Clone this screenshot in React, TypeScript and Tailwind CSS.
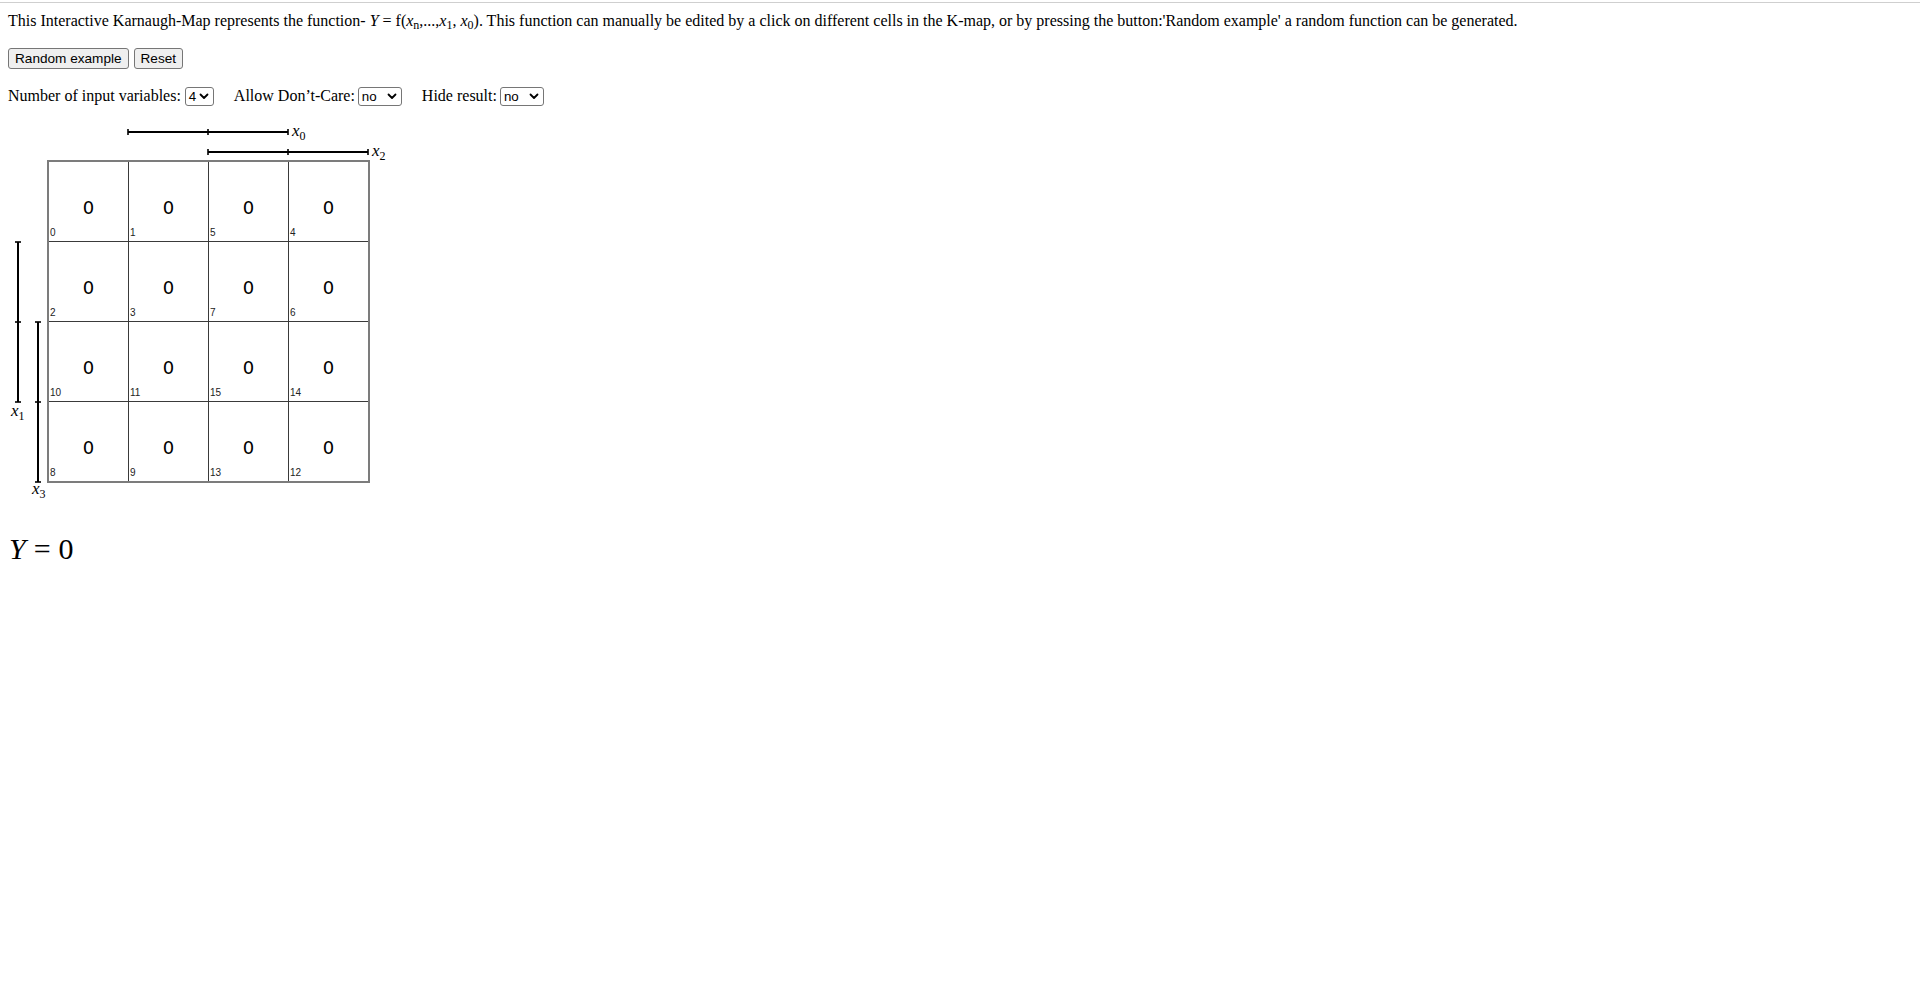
import { useState } from "react";

const ORDER = [
  [0, 1, 5, 4],
  [2, 3, 7, 6],
  [10, 11, 15, 14],
  [8, 9, 13, 12],
];

function Chevron() {
  return (
    <svg width="10" height="7" viewBox="0 0 10 7" fill="none" aria-hidden="true">
      <path d="M1.5 1.5l3.5 3.5 3.5-3.5" stroke="#000" strokeWidth="1.8" strokeLinecap="round" strokeLinejoin="round" />
    </svg>
  );
}

function Select({ value, width }: { value: string; width: string }) {
  return (
    <span
      className={`inline-flex h-[19px] items-center justify-between rounded-[3px] border border-[#767676] bg-white pl-[3px] pr-[4px] font-['Liberation_Sans',Arial,sans-serif] text-[13.33px] text-black ${width}`}
    >
      <span>{value}</span>
      <Chevron />
    </span>
  );
}

function Var({ sub }: { sub: string }) {
  return (
    <span>
      <i>x</i>
      <sub>{sub}</sub>
    </span>
  );
}

function AxisLabel({ sub, className }: { sub: string; className: string }) {
  return (
    <span className={`absolute font-['Liberation_Serif','Times_New_Roman',serif] text-[17px] leading-[17px] whitespace-nowrap ${className}`}>
      <i>x</i>
      <span className="relative top-[4px] text-[12px]">{sub}</span>
    </span>
  );
}

function Bar({ x1, y1, x2, y2 }: { x1: number; y1: number; x2: number; y2: number }) {
  const horizontal = y1 === y2;
  const ticks = horizontal ? [x1, (x1 + x2) / 2, x2] : [y1, (y1 + y2) / 2, y2];
  return (
    <g stroke="#000" strokeWidth="2">
      <line x1={x1} y1={y1} x2={x2} y2={y2} />
      {ticks.map((t) =>
        horizontal ? (
          <line key={t} x1={t} y1={y1 - 3} x2={t} y2={y1 + 3} strokeWidth="1.6" />
        ) : (
          <line key={t} x1={x1 - 3} y1={t} x2={x1 + 3} y2={t} strokeWidth="1.6" />
        )
      )}
    </g>
  );
}

function KMap({ values, onToggle }: { values: number[]; onToggle: (i: number) => void }) {
  return (
    <div className="relative h-[390px] w-[400px] pt-[49px]">
      <svg className="absolute left-0 top-0" width="400" height="390" aria-hidden="true">
        <Bar x1={128} y1={21} x2={288} y2={21} />
        <Bar x1={208} y1={41} x2={368} y2={41} />
        <Bar x1={18} y1={131} x2={18} y2={291} />
        <Bar x1={38} y1={211} x2={38} y2={371} />
      </svg>
      <AxisLabel sub="0" className="left-[292px] top-[11px]" />
      <AxisLabel sub="2" className="left-[372px] top-[31px]" />
      <AxisLabel sub="1" className="left-[11px] top-[291px]" />
      <AxisLabel sub="3" className="left-[32px] top-[369px]" />

      <div className="ml-[47px] grid w-fit grid-cols-[80px_80px_80px_79px] border-2 border-[#7c7c7c]">
        {ORDER.map((row, r) =>
          row.map((idx, c) => (
            <div
              key={idx}
              onClick={() => onToggle(idx)}
              className={`flex cursor-pointer flex-col ${c < 3 ? "border-r border-[#3a3a3a]" : ""} ${
                r < 3 ? "h-[80px] border-b border-[#3a3a3a]" : "h-[79px]"
              }`}
            >
              <div className="pt-[36px] text-center font-['DejaVu_Sans',Verdana,sans-serif] text-[18px] leading-[20px] text-black">
                {values[idx]}
              </div>
              <div className="mt-auto pb-[3px] pl-[1px] font-['Liberation_Sans',Arial,sans-serif] text-[10px] leading-[11px] text-[#222]">
                {idx}
              </div>
            </div>
          ))
        )}
      </div>
    </div>
  );
}

export default function App() {
  const [values, setValues] = useState<number[]>(() => Array(16).fill(0));
  const toggle = (i: number) =>
    setValues((prev) => prev.map((v, j) => (j === i ? (v ? 0 : 1) : v)));

  return (
    <div className="min-h-screen bg-white font-['Liberation_Serif','Times_New_Roman',serif] text-black">
      <div className="pt-[2px]">
        <div className="h-px bg-[#cfcfcf]" />
      </div>
      <div className="px-2 pt-[6px]">
        <p className="text-[16px]">
          This Interactive Karnaugh-Map represents the function- <i>Y</i> = f(
          <Var sub="n" />
          ,...,
          <Var sub="1" />, <Var sub="0" />
          ). This function can manually be edited by a click on different cells in the K-map, or by pressing the
          button:'Random example' a random function can be generated.
        </p>

        <div className="mt-[15px] flex gap-[5px] font-['Liberation_Sans',Arial,sans-serif] text-[13.6px]">
          <button
            type="button"
            onClick={() => setValues(Array.from({ length: 16 }, () => (Math.random() < 0.5 ? 0 : 1)))}
            className="h-[21px] rounded-[3px] border border-[#767676] bg-[#efefef] px-[6px] text-black"
          >
            Random example
          </button>
          <button
            type="button"
            onClick={() => setValues(Array(16).fill(0))}
            className="h-[21px] rounded-[3px] border border-[#767676] bg-[#efefef] px-[6px] text-black"
          >
            Reset
          </button>
        </div>

        <div className="mt-[17px] flex h-[19px] items-center text-[16px]">
          <span>Number of input variables:</span>
          <span className="ml-[4px]">
            <Select value="4" width="w-[29px]" />
          </span>
          <span className="ml-[20px]">Allow Don’t-Care:</span>
          <span className="ml-[3px]">
            <Select value="no" width="w-[44px]" />
          </span>
          <span className="ml-[20px]">Hide result:</span>
          <span className="ml-[3px]">
            <Select value="no" width="w-[44px]" />
          </span>
        </div>
      </div>

      <div className="mt-[6px]">
        <KMap values={values} onToggle={toggle} />
      </div>

      <div className="mt-[31px] px-2 text-[30px] leading-[34px]">
        <span className="ml-[1px]">
          <i>Y</i>
          <span className="mx-[8px]">=</span>
          {values.some((v) => v) ? "…" : "0"}
        </span>
      </div>
    </div>
  );
}
